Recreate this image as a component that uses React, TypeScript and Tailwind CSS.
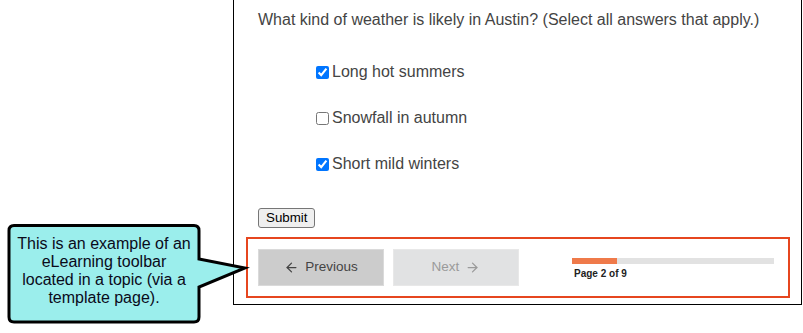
import { ArrowLeft, ArrowRight } from "lucide-react";

const answers = [
  { label: "Long hot summers", checked: true },
  { label: "Snowfall in autumn", checked: false },
  { label: "Short mild winters", checked: true },
];

function Callout() {
  return (
    <div className="absolute left-0 top-0 w-[250px] h-[333px] pointer-events-none">
      <svg width="250" height="333" className="absolute left-0 top-0">
        <path
          d="M14 225.5 H194 Q199 225.5 199 230.5 V259 L245 268 L199 287 V317 Q199 322 194 322 H14 Q9 322 9 317 V230.5 Q9 225.5 14 225.5 Z"
          fill="#9beeec"
          stroke="#000"
          strokeWidth="3"
          strokeLinejoin="miter"
        />
      </svg>
      <div className="absolute left-[9px] top-[235px] w-[190px] text-center text-[16px] leading-[18px] text-[#0a0a1a]">
        This is an example of an
        <br />
        eLearning toolbar
        <br />
        located in a topic (via a
        <br />
        template page).
      </div>
    </div>
  );
}

export default function App() {
  const page = 2;
  const total = 9;

  return (
    <div className="relative w-[803px] h-[333px] bg-white font-['Liberation_Sans',Arial,sans-serif]">
      <div className="ml-[233px] w-[569px] h-[305px] border-x border-b border-black">
        <p className="pt-[11px] pl-[24px] text-[16px] leading-[18px] text-[#444]">
          What kind of weather is likely in Austin? (Select all answers that apply.)
        </p>

        <div className="mt-[34px] ml-[79px] flex flex-col gap-[28px]">
          {answers.map((a) => (
            <label key={a.label} className="flex items-center h-[18px] text-[16px] leading-[18px] text-[#444]">
              <input type="checkbox" defaultChecked={a.checked} className="m-[3px] w-[13px] h-[13px] accent-[#0075ff]" />
              {a.label}
            </label>
          ))}
        </div>

        <button className="block mt-[35px] ml-[24px] h-[20px] px-[7px] border border-[#767676] rounded-[3px] bg-[#efefef] text-[13.33px] leading-[16px] text-black">
          Submit
        </button>

        <div className="mt-[9px] ml-[12px] mr-[11px] h-[61px] border-2 border-[#e6461f] p-[10px] flex items-start">
          <button className="w-[126px] h-[37px] bg-[#cccccc] border border-[#dadada] flex items-center justify-center gap-[6px] text-[13.5px] text-[#444]">
            <ArrowLeft size={15} strokeWidth={2} />
            Previous
          </button>
          <button className="ml-[9px] w-[126px] h-[37px] bg-[#e1e2e3] border border-[#e8e8e8] flex items-center justify-center gap-[6px] text-[13.5px] text-[#9a9a9a]">
            Next
            <ArrowRight size={15} strokeWidth={2} />
          </button>
          <div className="ml-[53px] w-[202px] pt-[9px]">
            <div className="h-[6px] bg-[#e2e2e2]">
              <div className="h-full bg-[#ef7a4a]" style={{ width: `${(page / total) * 100}%` }} />
            </div>
            <div className="mt-[4px] ml-[2px] text-[10px] leading-[12px] font-bold text-[#222]">
              Page {page} of {total}
            </div>
          </div>
        </div>
      </div>
      <Callout />
    </div>
  );
}
